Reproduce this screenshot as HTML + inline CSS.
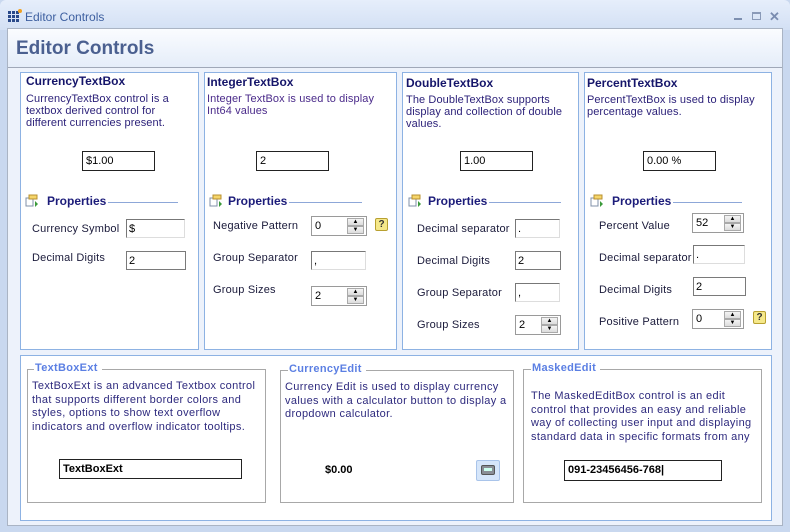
<!DOCTYPE html>
<html><head><meta charset="utf-8"><style>
*{margin:0;padding:0;box-sizing:border-box}
body{width:790px;height:532px;position:relative;overflow:hidden;background:#c9d8ef;font-family:"Liberation Sans",sans-serif;font-size:11px;color:#000}
.a{position:absolute}
.panel{position:absolute;background:#fff;border:1px solid #8db2e3}
.t{position:absolute;font-weight:bold;font-size:12px;color:#15156a;white-space:nowrap}
.d{position:absolute;font-size:11px;line-height:12px;color:#2a1f78;white-space:nowrap;letter-spacing:0.1px}
.lbl{position:absolute;font-size:11px;color:#1a1a3a;white-space:nowrap;letter-spacing:0.2px}
.inp{position:absolute;border:1px solid #7a7a7a;background:#fff;font-size:11px;padding:3px 0 0 2px}
.inpk{position:absolute;border:1px solid #222;background:#fff;font-size:11px;padding:3px 0 0 3px}
.spin{position:absolute;border:1px solid #9a9a9a;background:#fff;font-size:11px;padding:3px 0 0 3px}
.spin i{position:absolute;right:2px;width:17px;height:8px;background:linear-gradient(#f4f4f4,#dcdcdc);border:1px solid #aaa;font-style:normal;font-size:6px;line-height:6px;text-align:center;color:#000}
.ph{position:absolute;font-weight:bold;font-size:12px;color:#1c1c7a;white-space:nowrap}
.pl{position:absolute;height:1px;background:#8da7d8}
.help{position:absolute;width:13px;height:13px;background:#f5e88a;border:1px solid #b8a030;border-radius:2px;font-weight:bold;font-size:10px;line-height:12px;text-align:center;color:#333}
.gb{position:absolute;border:1px solid #a8a8a8}
.lg{position:absolute;background:#fff;font-weight:bold;font-size:11px;color:#5b7fe3;padding:0 4px 0 1px;letter-spacing:0.3px}
.bd{position:absolute;font-size:11px;line-height:13.5px;color:#2e2a7e;white-space:nowrap;letter-spacing:0.35px}
</style></head><body>
<div class="a" style="left:0;top:0;width:790px;height:30px;background:linear-gradient(#e6eefb,#d3e0f4);border-radius:6px 6px 0 0"></div>
<svg class="a" style="left:8px;top:9px" width="14" height="13"><g fill="#2a4a8a"><rect x="0" y="2" width="3" height="3"/><rect x="4" y="2" width="3" height="3"/><rect x="8" y="2" width="3" height="3"/><rect x="0" y="6" width="3" height="3"/><rect x="4" y="6" width="3" height="3"/><rect x="8" y="6" width="3" height="3"/><rect x="0" y="10" width="3" height="3"/><rect x="4" y="10" width="3" height="3"/><rect x="8" y="10" width="3" height="3"/></g><circle cx="12" cy="2" r="2" fill="#f0a020"/></svg>
<div class="a" style="left:25px;top:10px;font-size:12px;color:#3d5fa0">Editor Controls</div>
<div class="a" style="left:734px;top:18px;width:8px;height:2px;background:#7d8fb0"></div>
<div class="a" style="left:752px;top:12px;width:9px;height:8px;border:1px solid #8a9ab8;border-top-width:2px"></div>
<div class="a" style="left:769px;top:9px;font-size:13px;font-weight:bold;color:#7a8cb0">✕</div>
<div class="a" style="left:7px;top:28px;width:776px;height:498px;background:#edf2fb;border:1px solid #aab4c4"></div>
<div class="a" style="left:8px;top:29px;width:774px;height:39px;background:linear-gradient(#fafcff,#e5edf9);border-bottom:1px solid #a0a8b8"></div>
<div class="a" style="left:16px;top:38px;font-size:19px;font-weight:bold;color:#4b6090">Editor Controls</div>

<!-- Panel 1 -->
<div class="panel" style="left:20px;top:72px;width:179px;height:278px"></div>
<div class="t" style="left:26px;top:74px">CurrencyTextBox</div>
<div class="d" style="left:26px;top:93px">CurrencyTextBox control is a<br>textbox derived control for<br>different currencies present.</div>
<div class="inpk" style="left:82px;top:151px;width:73px;height:20px">$1.00</div>
<svg class="a" style="left:25px;top:194px" width="14" height="14"><rect x="1" y="4" width="7" height="8" fill="#fff" stroke="#8090a8"/><rect x="4" y="1" width="8" height="4" fill="#f5d56a" stroke="#b89030"/><path d="M10 7v6l3-3z" fill="#3a9a3a"/></svg>
<div class="ph" style="left:47px;top:194px">Properties</div>
<div class="pl" style="left:108px;top:202px;width:70px"></div>
<div class="lbl" style="left:32px;top:223px">Currency Symbol</div>
<div class="inp" style="left:126px;top:219px;width:59px;height:19px;border-color:#777 #ddd #ddd #777">$</div>
<div class="lbl" style="left:32px;top:252px">Decimal Digits</div>
<div class="inp" style="left:126px;top:251px;width:60px;height:19px">2</div>

<!-- Panel 2 -->
<div class="panel" style="left:204px;top:72px;width:193px;height:278px"></div>
<div class="t" style="left:207px;top:75px">IntegerTextBox</div>
<div class="d" style="left:207px;top:93px;color:#4a2a8a">Integer TextBox is used to display<br>Int64 values</div>
<div class="inpk" style="left:256px;top:151px;width:73px;height:20px">2</div>
<svg class="a" style="left:209px;top:194px" width="14" height="14"><rect x="1" y="4" width="7" height="8" fill="#fff" stroke="#8090a8"/><rect x="4" y="1" width="8" height="4" fill="#f5d56a" stroke="#b89030"/><path d="M10 7v6l3-3z" fill="#3a9a3a"/></svg>
<div class="ph" style="left:228px;top:194px">Properties</div>
<div class="pl" style="left:289px;top:202px;width:73px"></div>
<div class="lbl" style="left:213px;top:220px">Negative Pattern</div>
<div class="spin" style="left:311px;top:216px;width:56px;height:20px">0<i style="top:1px">▲</i><i style="top:9px">▼</i></div>
<div class="help" style="left:375px;top:218px">?</div>
<div class="lbl" style="left:213px;top:252px">Group Separator</div>
<div class="inp" style="left:311px;top:251px;width:55px;height:19px;border-color:#777 #ddd #ddd #777">,</div>
<div class="lbl" style="left:213px;top:284px">Group Sizes</div>
<div class="spin" style="left:311px;top:286px;width:56px;height:20px">2<i style="top:1px">▲</i><i style="top:9px">▼</i></div>

<!-- Panel 3 -->
<div class="panel" style="left:402px;top:72px;width:177px;height:278px"></div>
<div class="t" style="left:406px;top:76px">DoubleTextBox</div>
<div class="d" style="left:406px;top:94px">The DoubleTextBox supports<br>display and collection of double<br>values.</div>
<div class="inpk" style="left:460px;top:151px;width:73px;height:20px">1.00</div>
<svg class="a" style="left:408px;top:194px" width="14" height="14"><rect x="1" y="4" width="7" height="8" fill="#fff" stroke="#8090a8"/><rect x="4" y="1" width="8" height="4" fill="#f5d56a" stroke="#b89030"/><path d="M10 7v6l3-3z" fill="#3a9a3a"/></svg>
<div class="ph" style="left:428px;top:194px">Properties</div>
<div class="pl" style="left:489px;top:202px;width:72px"></div>
<div class="lbl" style="left:417px;top:223px">Decimal separator</div>
<div class="inp" style="left:515px;top:219px;width:45px;height:19px;border-color:#777 #ddd #ddd #777">.</div>
<div class="lbl" style="left:417px;top:255px">Decimal Digits</div>
<div class="inp" style="left:515px;top:251px;width:46px;height:19px">2</div>
<div class="lbl" style="left:417px;top:287px">Group Separator</div>
<div class="inp" style="left:515px;top:283px;width:45px;height:19px;border-color:#777 #ddd #ddd #777">,</div>
<div class="lbl" style="left:417px;top:319px">Group Sizes</div>
<div class="spin" style="left:515px;top:315px;width:46px;height:20px">2<i style="top:1px">▲</i><i style="top:9px">▼</i></div>

<!-- Panel 4 -->
<div class="panel" style="left:584px;top:72px;width:188px;height:278px"></div>
<div class="t" style="left:587px;top:76px">PercentTextBox</div>
<div class="d" style="left:587px;top:94px">PercentTextBox is used to display<br>percentage values.</div>
<div class="inpk" style="left:643px;top:151px;width:73px;height:20px">0.00 %</div>
<svg class="a" style="left:590px;top:194px" width="14" height="14"><rect x="1" y="4" width="7" height="8" fill="#fff" stroke="#8090a8"/><rect x="4" y="1" width="8" height="4" fill="#f5d56a" stroke="#b89030"/><path d="M10 7v6l3-3z" fill="#3a9a3a"/></svg>
<div class="ph" style="left:612px;top:194px">Properties</div>
<div class="pl" style="left:673px;top:202px;width:69px"></div>
<div class="lbl" style="left:599px;top:220px">Percent Value</div>
<div class="spin" style="left:692px;top:213px;width:52px;height:20px">52<i style="top:1px">▲</i><i style="top:9px">▼</i></div>
<div class="lbl" style="left:599px;top:252px">Decimal separator</div>
<div class="inp" style="left:693px;top:245px;width:52px;height:19px;border-color:#777 #ddd #ddd #777">.</div>
<div class="lbl" style="left:599px;top:284px">Decimal Digits</div>
<div class="inp" style="left:693px;top:277px;width:53px;height:19px">2</div>
<div class="lbl" style="left:599px;top:316px">Positive Pattern</div>
<div class="spin" style="left:692px;top:309px;width:52px;height:20px">0<i style="top:1px">▲</i><i style="top:9px">▼</i></div>
<div class="help" style="left:753px;top:311px">?</div>

<!-- Bottom panel -->
<div class="panel" style="left:20px;top:355px;width:752px;height:166px"></div>
<div class="gb" style="left:27px;top:369px;width:239px;height:134px"></div>
<div class="lg" style="left:34px;top:362px">TextBoxExt</div>
<div class="bd" style="left:32px;top:380px">TextBoxExt is an advanced Textbox control<br>that supports different border colors and<br>styles, options to show text overflow<br>indicators and overflow indicator tooltips.</div>
<div class="inpk" style="left:59px;top:459px;width:183px;height:20px;font-weight:bold;padding-top:3px">TextBoxExt</div>

<div class="gb" style="left:280px;top:370px;width:234px;height:133px"></div>
<div class="lg" style="left:288px;top:363px">CurrencyEdit</div>
<div class="bd" style="left:285px;top:381px">Currency Edit is used to display currency<br>values with a calculator button to display a<br>dropdown calculator.</div>
<div class="a" style="left:325px;top:464px;font-weight:bold">$0.00</div>
<div class="a" style="left:476px;top:460px;width:24px;height:21px;background:#d6e6fa;border:1px solid #a9c4ea;border-radius:2px"></div>
<div class="a" style="left:481px;top:465px;width:14px;height:10px;background:#8a8e96;border:1px solid #555;border-radius:2px"><div style="margin:2px 2px;height:3px;background:#cfe"></div></div>

<div class="gb" style="left:523px;top:369px;width:239px;height:134px"></div>
<div class="lg" style="left:531px;top:362px">MaskedEdit</div>
<div class="bd" style="left:531px;top:390px">The MaskedEditBox control is an edit<br>control that provides an easy and reliable<br>way of collecting user input and displaying<br>standard data in specific formats from any</div>
<div class="inpk" style="left:564px;top:460px;width:158px;height:21px;font-weight:bold">091-23456456-768|</div>
</body></html>
